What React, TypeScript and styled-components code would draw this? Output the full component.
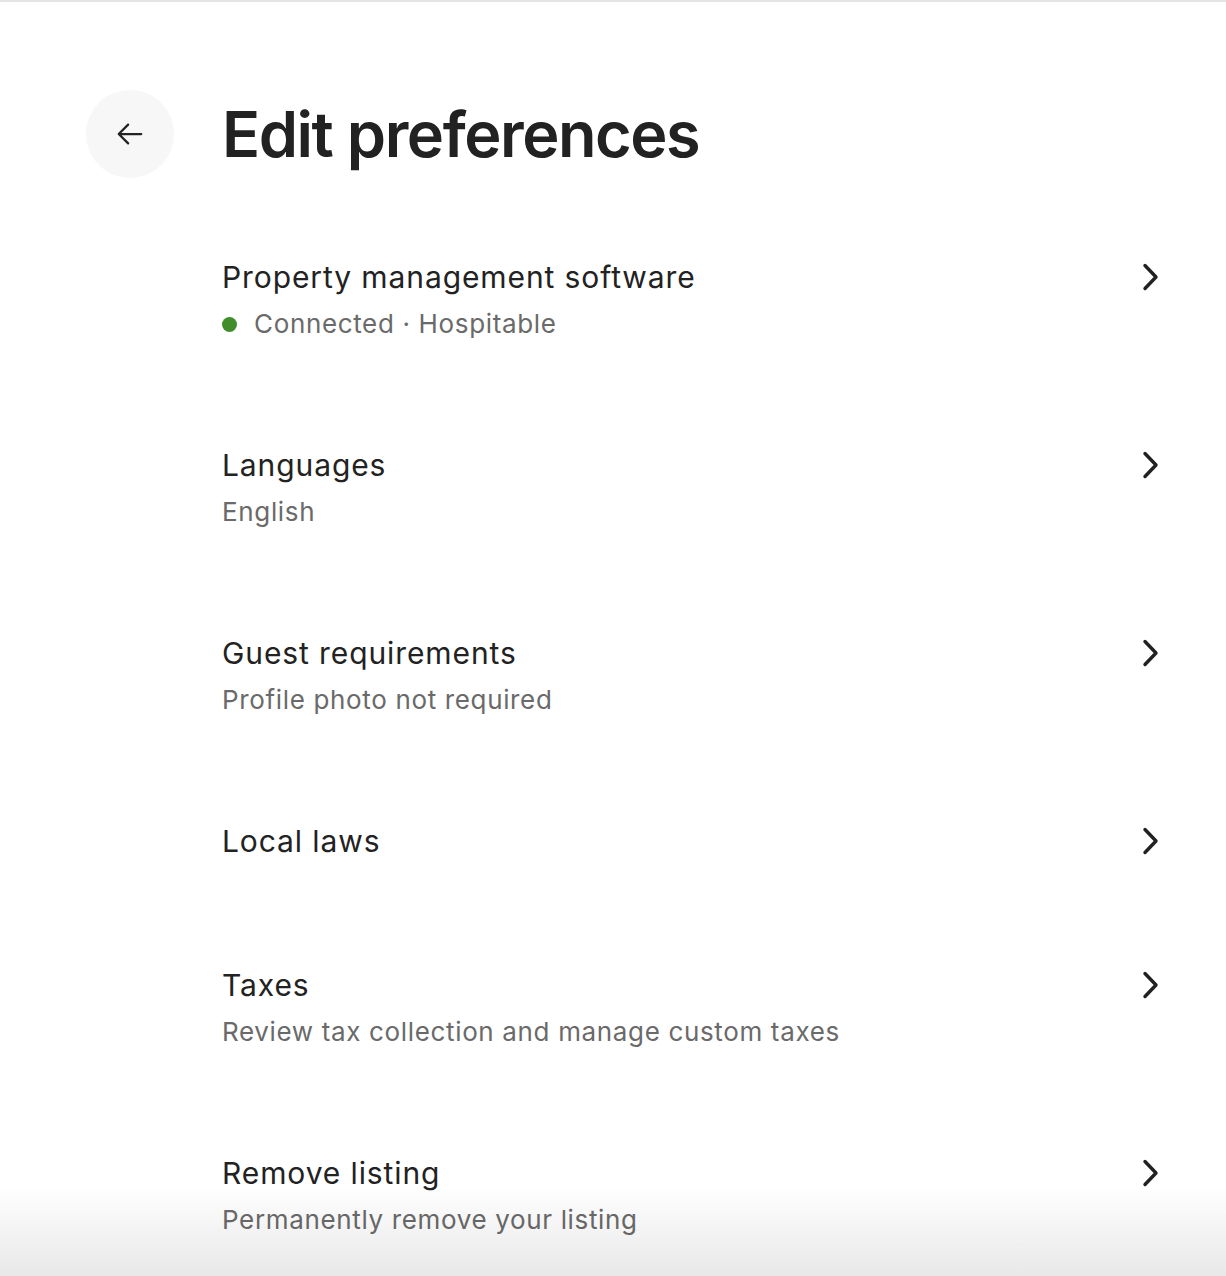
import React from "react";
import styled, { createGlobalStyle } from "styled-components";

const GlobalStyle = createGlobalStyle`
  html, body {
    margin: 0;
    padding: 0;
    background: #ffffff;
  }
  body {
    font-family: Inter, "Noto Sans", "Liberation Sans", sans-serif;
    color: #222222;
    -webkit-font-smoothing: antialiased;
  }
`;

const Page = styled.div`
  border-top: 2px solid #e4e4e4;
  padding: 88px 66px 40px 86px;
  min-height: 1200px;
  box-sizing: border-box;
`;

const Header = styled.header`
  display: flex;
  align-items: center;
  gap: 48px;
`;

const BackButton = styled.button`
  width: 88px;
  height: 88px;
  border-radius: 50%;
  border: none;
  background: #f7f7f7;
  display: flex;
  align-items: center;
  justify-content: center;
  padding: 0;
  cursor: pointer;
  flex-shrink: 0;
`;

const Title = styled.h1`
  margin: 0;
  font-size: 63px;
  font-weight: 600;
  letter-spacing: -1.45px;
  line-height: 88px;
  color: #222222;
`;

const List = styled.div`
  display: flex;
  flex-direction: column;
  margin-top: 27px;
  margin-left: 136px;
`;

const Row = styled.div`
  display: flex;
  align-items: flex-start;
  justify-content: space-between;
  padding: 53px 0;
  cursor: pointer;
`;

const RowText = styled.div`
  display: flex;
  flex-direction: column;
`;

const RowTitle = styled.div`
  font-size: 30px;
  line-height: 38px;
  font-weight: 400;
  letter-spacing: 0.9px;
  color: #222222;
`;

const RowSub = styled.div`
  margin-top: 12px;
  font-size: 26px;
  line-height: 32px;
  letter-spacing: 0.65px;
  color: #6a6a6a;
  display: flex;
  align-items: center;
  gap: 17px;
`;

const StatusDot = styled.span<{ $color: string }>`
  width: 15px;
  height: 15px;
  border-radius: 50%;
  background: ${(p) => p.$color};
  flex-shrink: 0;
`;

const ChevronBox = styled.div`
  height: 38px;
  display: flex;
  align-items: center;
`;

const BottomFade = styled.div`
  position: fixed;
  left: 0;
  right: 0;
  bottom: 0;
  height: 90px;
  pointer-events: none;
  mix-blend-mode: multiply;
  background: linear-gradient(to bottom, rgba(235, 235, 235, 0), rgba(232, 232, 232, 1));
`;

const ArrowLeft = () => (
  <svg width="30" height="30" viewBox="0 0 32 32" fill="none">
    <path
      d="M28 16H4M14 6L4 16l10 10"
      stroke="#222"
      strokeWidth="2.4"
      strokeLinecap="round"
      strokeLinejoin="round"
    />
  </svg>
);

const Chevron = () => (
  <svg width="18" height="28" viewBox="0 0 18 28" fill="none">
    <path
      d="M3 2.5l11 11.5L3 25.5"
      stroke="#222"
      strokeWidth="3.4"
      strokeLinecap="round"
      strokeLinejoin="round"
    />
  </svg>
);

type Item = { title: string; sub?: string; status?: string };

const items: Item[] = [
  { title: "Property management software", sub: "Connected · Hospitable", status: "#3f8d2b" },
  { title: "Languages", sub: "English" },
  { title: "Guest requirements", sub: "Profile photo not required" },
  { title: "Local laws" },
  { title: "Taxes", sub: "Review tax collection and manage custom taxes" },
  { title: "Remove listing", sub: "Permanently remove your listing" },
];

export default function App() {
  return (
    <>
      <GlobalStyle />
      <Page>
        <Header>
          <BackButton aria-label="Back">
            <ArrowLeft />
          </BackButton>
          <Title>Edit preferences</Title>
        </Header>
        <List>
          {items.map((x) => (
            <Row key={x.title}>
              <RowText>
                <RowTitle>{x.title}</RowTitle>
                {x.sub && (
                  <RowSub>
                    {x.status && <StatusDot $color={x.status} />}
                    <span>{x.sub}</span>
                  </RowSub>
                )}
              </RowText>
              <ChevronBox>
                <Chevron />
              </ChevronBox>
            </Row>
          ))}
        </List>
      </Page>
      <BottomFade />
    </>
  );
}
